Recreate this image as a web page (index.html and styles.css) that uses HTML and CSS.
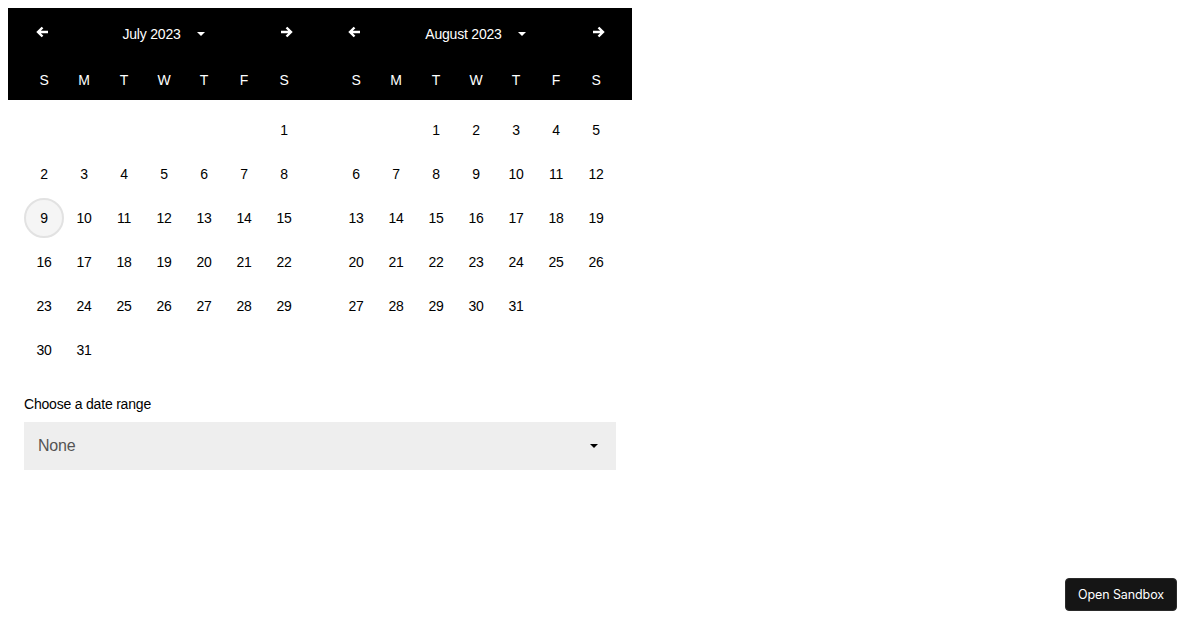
FILE: index.html
```html
<html>
    <head>
        <meta name="viewport" content="width=device-width, initial-scale=1.0">
        <link rel="stylesheet" href="styles.css">
    </head>
    <body>

        <div class="picker">
            <div class="months" id="months"></div>
            <div class="range">
                <label for="range">Choose a date range</label>
                <div class="select" id="range">
                    <span>None</span>
                    <span class="caret"></span>
                </div>
            </div>
        </div>

        <button class="sandbox">Open Sandbox</button>

        <script>
            const DAYS = ['S', 'M', 'T', 'W', 'T', 'F', 'S'];
            const MONTHS = [
                { name: 'July 2023', offset: 6, count: 31 },
                { name: 'August 2023', offset: 2, count: 31 }
            ];
            const SELECTED = { month: 0, day: 9 };

            const arrow = (dir) => {
                const d = dir === 'left'
                    ? 'M12 6H2.5 M6.5 1.5L2 6l4.5 4.5'
                    : 'M1 6h9.5 M6.5 1.5L11 6l-4.5 4.5';
                return `<button class="nav ${dir}"><svg viewBox="0 0 13 12" width="13" height="12"><path fill="none" stroke="#fff" stroke-width="2.4" d="${d}"/></svg></button>`;
            };

            const container = document.getElementById('months');

            MONTHS.forEach((m, i) => {
                const month = document.createElement('div');
                month.className = 'month';

                let html = '<div class="head"><div class="title-row">' + arrow('left') +
                    `<div class="title">${m.name}<span class="caret light"></span></div>` +
                    arrow('right') + '</div><div class="weekdays">';
                html += DAYS.map(d => `<div>${d}</div>`).join('');
                html += '</div></div><div class="grid">';
                for (let k = 0; k < m.offset; k++) html += '<div></div>';
                for (let d = 1; d <= m.count; d++) {
                    const sel = SELECTED.month === i && SELECTED.day === d ? ' selected' : '';
                    html += `<div class="day${sel}"><span>${d}</span></div>`;
                }
                html += '</div>';
                month.innerHTML = html;
                container.append(month);
            });
        </script>
    </body>
</html>
```

FILE: styles.css
```css
html, body {
    margin: 0;
    padding: 0;
    font-family: "Liberation Sans", Arial, sans-serif;
    font-size: 14px;
    letter-spacing: -0.2px;
    color: #000;
    background: #fff;
}
body {
    padding: 8px;
}
.picker {
    width: 624px;
}
.months {
    display: flex;
}
.month {
    width: 312px;
}
.head {
    background: #000;
    color: #fff;
    padding: 0 16px;
}
.title-row {
    height: 50px;
    display: flex;
    align-items: center;
    justify-content: space-between;
}
.nav {
    width: 40px;
    height: 40px;
    border: none;
    background: none;
    padding: 0;
    display: flex;
    align-items: center;
    justify-content: center;
    cursor: pointer;
}
.nav.left {
    margin-left: -2px;
    margin-top: -2px;
}
.nav.right {
    margin-right: -3px;
    margin-top: -2px;
}
.title {
    display: flex;
    align-items: center;
    margin-left: -2px;
    margin-top: 2px;
}
.weekdays, .grid {
    display: grid;
    grid-template-columns: repeat(7, 40px);
}
.weekdays {
    height: 42px;
    align-items: center;
}
.weekdays > div {
    text-align: center;
    padding-top: 2px;
}
.grid {
    padding: 8px 16px;
    grid-auto-rows: 44px;
}
.day {
    display: flex;
    align-items: center;
    justify-content: center;
}
.day span {
    width: 40px;
    height: 40px;
    border-radius: 50%;
    display: flex;
    align-items: center;
    justify-content: center;
    box-sizing: border-box;
}
.day.selected span {
    background: #f5f5f5;
    border: 2px solid #e2e2e2;
}
.caret {
    display: inline-block;
    width: 0;
    height: 0;
    border-left: 4px solid transparent;
    border-right: 4px solid transparent;
    border-top: 4px solid #000;
}
.caret.light {
    border-top-color: #fff;
    margin-left: 16px;
}
.range {
    padding: 16px 16px 0 16px;
}
.range label {
    display: block;
    margin-bottom: 10px;
}
.select {
    height: 48px;
    background: #eeeeee;
    display: flex;
    align-items: center;
    justify-content: space-between;
    padding: 0 18px 0 14px;
    font-size: 16px;
    color: #545454;
}
.sandbox {
    position: fixed;
    right: 23px;
    bottom: 19px;
    height: 33px;
    padding: 0 12px;
    background: #151515;
    color: #fff;
    border: 1px solid #2a2a2a;
    border-radius: 4px;
    font-family: Inter, "Liberation Sans", sans-serif;
    font-size: 12.5px;
    letter-spacing: -0.1px;
}
```
